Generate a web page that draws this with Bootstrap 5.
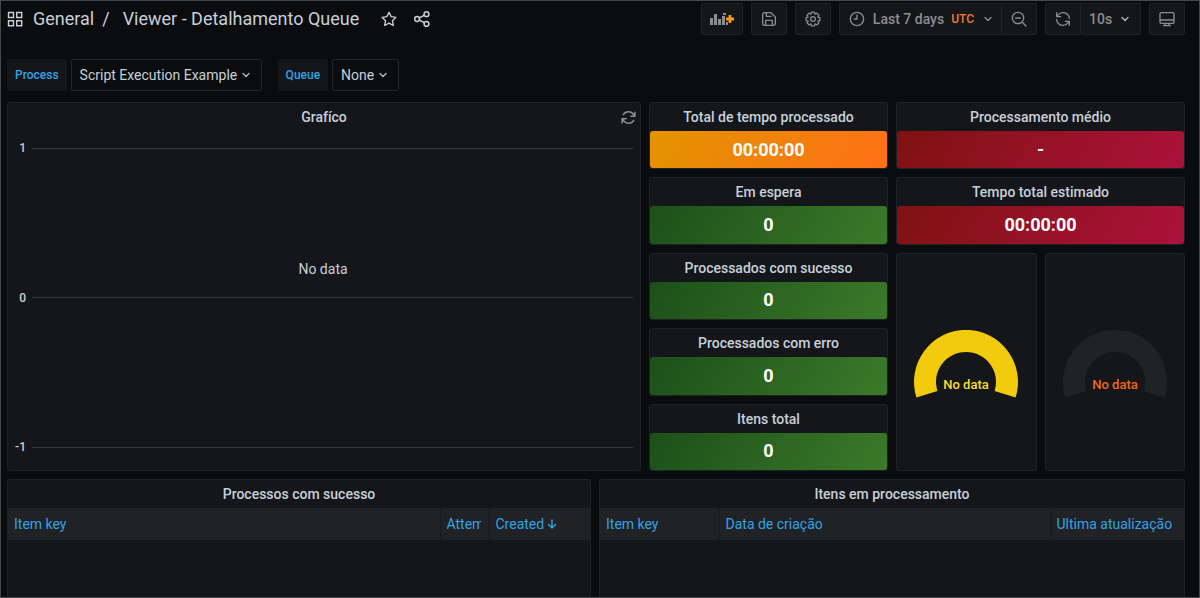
<!DOCTYPE html>
<html lang="pt-BR" data-bs-theme="dark">
<head>
<meta charset="utf-8">
<meta name="viewport" content="width=device-width, initial-scale=1">
<title>Viewer - Detalhamento Queue</title>
<link href="https://cdn.jsdelivr.net/npm/bootstrap@5.3.0/dist/css/bootstrap.min.css" rel="stylesheet">
<style>
  :root { --panel: #141619; --line: #202226; --ink: #c7d0d9; --dim: #8a8d93; --link: #33a2e5; }
  body { background: #0b0c0e; color: var(--ink); font-family: Roboto, "Liberation Sans", sans-serif; font-size: 14px; line-height: 20px; }
  .frame { border: 1px solid #464849; padding: 2px 14px 0 6px; }
  svg { display: block; flex: none; }
  .line-icon { fill: none; stroke: currentColor; stroke-width: 2; stroke-linecap: round; stroke-linejoin: round; }
  h1, h1 a { font-size: 18px; line-height: 32px; font-weight: 400; margin: 0; color: var(--ink); text-decoration: none; white-space: nowrap; }
  .crumbs { margin: 0 22px 0 10px; }
  .crumbs span { padding: 0 13px 0 8px; }
  .plain { background: none; border: 0; padding: 0; color: var(--ink); }
  .tool { --bs-btn-color: var(--dim); --bs-btn-bg: var(--panel); --bs-btn-border-color: var(--line); --bs-btn-hover-bg: #202226; --bs-btn-hover-color: #c7d0d9; --bs-btn-hover-border-color: #2c3235;
    --bs-btn-border-radius: 2px; --bs-btn-padding-x: 9px; --bs-btn-padding-y: 0; --bs-btn-font-size: 14px; --bs-btn-font-weight: 500; height: 32px; display: flex; align-items: center; justify-content: center; min-width: 36px; white-space: nowrap; }
  .tool-wide { --bs-btn-padding-x: 8px; }
  .utc { color: #f37a28; font-size: 12px; margin: 0 10px 0 7px; }
  .pick { appearance: none; height: 32px; color: var(--ink); background: #0b0c0e url("data:image/svg+xml,%3Csvg xmlns='http://www.w3.org/2000/svg' viewBox='0 0 8 8' fill='none' stroke='%23b4bac2' stroke-width='1.3' stroke-linecap='round'%3E%3Cpath d='M1 2.5 4 5.5 7 2.5'/%3E%3C/svg%3E") no-repeat right 11px center / 8px; border: 1px solid #25272b; border-radius: 2px; padding: 0 24px 0 8px; }
  .pick-script { width: 191px; }
  .pick-queue { width: 67px; }
  .pick-rate { width: 60px; background-color: var(--panel); border-color: var(--line); color: var(--dim); font-weight: 500; border-left: 0; }
  .var-label { background: var(--panel); color: var(--link); height: 32px; line-height: 32px; padding: 0 8px; font-size: 12px; font-weight: 500; border-radius: 2px; }
  .vars { margin-top: 24px; }
  .board { display: grid; gap: 8px; margin-top: 11px; grid-template-columns: 634fr 239fr 289fr; min-height: 369px; }
  .stack { display: grid; gap: 8px; grid-template-rows: repeat(5, 1fr); }
  .gauges { grid-row: 3 / 6; display: grid; gap: 8px; grid-template-columns: 1fr 1fr; }
  .pane { background: var(--panel); border: 1px solid var(--line); border-radius: 3px; display: flex; flex-direction: column; min-width: 0; position: relative; }
  .pane h2 { color: var(--ink); font-size: 14px; font-weight: 500; line-height: 28px; margin: 0; text-align: center; white-space: nowrap; }
  .figure-tile { flex: 1; border-radius: 3px; color: #fff; font-size: 18px; font-weight: 700; display: flex; align-items: center; justify-content: center; }
  .amber { background: linear-gradient(120deg, #e39400, #ff7016); }
  .green { background: linear-gradient(120deg, #1c5019, #3b7a29); }
  .crimson { background: linear-gradient(120deg, #7f1211, #ac123b); }
  .reload { position: absolute; top: 7px; right: 4px; color: var(--dim); }
  .plot { flex: 1; margin: 9px 7px 15px 5px; position: relative; font-size: 12px; line-height: 16px; font-weight: 500; display: flex; flex-direction: column; justify-content: space-between; }
  .tick { display: flex; align-items: center; gap: 6px; }
  .tick span { width: 13px; text-align: right; }
  .tick i { flex: 1; height: 1px; background: #37393d; }
  .empty-note { position: absolute; inset: 0; padding-bottom: 58px; display: flex; align-items: center; justify-content: center; font-size: 14px; font-weight: 400; }
  .gauge text { font-size: 13px; font-weight: 500; text-anchor: middle; }
  .lists { display: grid; gap: 8px; margin-top: 8px; grid-template-columns: 584fr 586fr; flex: 1; }
  .lists .pane { border-bottom: 0; border-radius: 3px 3px 0 0; }
  .grid-table { table-layout: fixed; width: 100%; }
  .grid-table th { height: 32px; background: #202226; color: var(--link); font-weight: 400; padding: 0 8px 0 6px; border-right: 1px solid #17191c; white-space: nowrap; }
  .grid-table th:last-child { border-right: 0; }
  .grid-table th > span { display: flex; align-items: center; gap: 3px; overflow: hidden; }
</style>
</head>
<body>
<div class="frame min-vh-100 d-flex flex-column">
  <header class="d-flex align-items-center justify-content-between">
    <div class="d-flex align-items-center">
      <svg width="16" height="16" viewBox="0 0 16 16" fill="none" stroke="currentColor" stroke-width="1.4"><path d="M1.5 1.5h5v5h-5zM9.700 1.500h5v5h-5zM1.500 9.700h5v5h-5zM9.700 9.700h5v5h-5z"/></svg>
      <h1 class="crumbs d-flex"><a href="#">General</a><span>/</span><a href="#">Viewer - Detalhamento Queue</a></h1>
      <button class="plain" aria-label="Favorito"><svg class="line-icon" width="16" height="16" viewBox="0 0 24 24"><path d="m12 2 3.200 6.500 7.100 1-5.100 5 1.200 7.200L12 18.300l-6.400 3.400 1.200-7.200-5.100-5 7.100-1z"/></svg></button>
      <button class="plain ms-3" aria-label="Compartilhar"><svg class="line-icon" width="18" height="18" viewBox="0 0 24 24"><circle cx="5.500" cy="12" r="3.200"/><circle cx="18" cy="5.500" r="3.200"/><circle cx="18" cy="18.500" r="3.200"/><path d="m8.500 10.500 6.600-3.500M8.500 13.500l6.600 3.500"/></svg></button>
    </div>
    <div class="d-flex gap-2">
      <button class="btn tool tool-wide" aria-label="Adicionar painel"><svg width="24" height="16" viewBox="0 0 24 16"><path fill="#8a8d93" d="M0 7h3v7H0zM4 3h3v11H4zM8 8h3v6H8zM12 5h3v9h-3zM16 11h2v3h-2zM13 2h3v2h-3z"/><path d="M20 4v8m-4-4h8" stroke="#f79520" stroke-width="2.800"/></svg></button>
      <button class="btn tool" aria-label="Salvar"><svg class="line-icon" width="16" height="16" viewBox="0 0 24 24"><path d="M5 2.500h10l6.500 6.500v10a2.500 2.500 0 0 1-2.500 2.500H5A2.500 2.500 0 0 1 2.500 19V5A2.500 2.500 0 0 1 5 2.500zM8 2.500V8h7M7 21v-7h10v7"/></svg></button>
      <button class="btn tool" aria-label="Configurações"><svg class="line-icon" width="16" height="16" viewBox="0 0 24 24"><circle cx="12" cy="12" r="3.500"/><path d="M9.700 1.800h4.600l.8 2.900 2.700-1.500 3.100 3.100-1.500 2.700 2.900.8v4.500l-2.900.8 1.500 2.700-3.100 3.100-2.700-1.500-.8 2.900H9.700l-.8-2.900-2.700 1.500-3.100-3.100 1.500-2.700-2.900-.8V9.800l2.900-.8-1.500-2.700 3.100-3.100 2.700 1.500z"/></svg></button>
      <div class="btn-group">
        <button class="btn tool" aria-haspopup="true"><svg class="line-icon me-2" width="16" height="16" viewBox="0 0 24 24"><circle cx="12" cy="12" r="10"/><path d="M12 6v6H8"/></svg>Last 7 days<span class="utc">UTC</span><svg class="line-icon" width="8" height="8" viewBox="0 0 8 8" style="stroke-width:1.3"><path d="M1 2.500 4 5.500 7 2.500"/></svg></button>
        <button class="btn tool" aria-label="Reduzir zoom"><svg class="line-icon" width="16" height="16" viewBox="0 0 24 24"><circle cx="10.500" cy="10.500" r="8.500"/><path d="m17 17 5.500 5.500M7 10.500h7"/></svg></button>
      </div>
      <div class="d-flex">
        <button class="btn tool rounded-end-0" aria-label="Atualizar"><svg class="line-icon" width="16" height="16" viewBox="0 0 24 24"><path d="M21.500 11A9.500 9.500 0 0 0 4.500 6.200L2.500 8.500m0-6v6h6M2.500 13a9.500 9.500 0 0 0 17 4.800l2-2.300m0 6v-6h-6"/></svg></button>
        <select class="pick pick-rate" aria-label="Intervalo de atualização"><option>10s</option></select>
      </div>
      <button class="btn tool" aria-label="Modo de exibição"><svg class="line-icon" width="16" height="16" viewBox="0 0 24 24"><path d="M3.500 2.500h17a2 2 0 0 1 2 2v12a2 2 0 0 1-2 2h-17a2 2 0 0 1-2-2v-12a2 2 0 0 1 2-2zM1.500 13.500h21M9 18.500v3.500M15 18.500v3.500M7 22h10"/></svg></button>
    </div>
  </header>

  <div class="vars d-flex">
    <label class="var-label me-1" for="proc">Process</label>
    <select class="pick pick-script" id="proc"><option>Script Execution Example</option></select>
    <label class="var-label ms-3 me-1" for="queue">Queue</label>
    <select class="pick pick-queue" id="queue"><option>None</option></select>
  </div>

  <main class="d-flex flex-column flex-grow-1">
    <div class="board">
      <section class="pane">
        <h2>Grafíco</h2>
        <svg class="reload line-icon" width="15" height="15" viewBox="0 0 16 16" style="stroke-width:1.7"><path d="M14 6.500A6.300 6.300 0 0 0 2.500 5M2 9.500A6.300 6.300 0 0 0 13.500 11M14.800 2.500v4.200h-4.200M1.200 13.500V9.300h4.200"/></svg>
        <div class="plot">
          <div class="tick"><span>1</span><i></i></div>
          <div class="tick"><span>0</span><i></i></div>
          <div class="tick"><span>-1</span><i></i></div>
          <div class="empty-note">No data</div>
        </div>
      </section>
      <div class="stack">
        <section class="pane"><h2>Total de tempo processado</h2><div class="figure-tile amber">00:00:00</div></section>
        <section class="pane"><h2>Em espera</h2><div class="figure-tile green">0</div></section>
        <section class="pane"><h2>Processados com sucesso</h2><div class="figure-tile green">0</div></section>
        <section class="pane"><h2>Processados com erro</h2><div class="figure-tile green">0</div></section>
        <section class="pane"><h2>Itens total</h2><div class="figure-tile green">0</div></section>
      </div>
      <div class="stack">
        <section class="pane"><h2>Processamento médio</h2><div class="figure-tile crimson">-</div></section>
        <section class="pane"><h2>Tempo total estimado</h2><div class="figure-tile crimson">00:00:00</div></section>
        <div class="gauges">
          <section class="pane align-items-center justify-content-center pt-1"><svg class="gauge" width="104" height="68" viewBox="0 0 104 68"><path fill="#f2cc0c" d="M2.400 67.500A52 52 0 1 1 101.600 67.500L80.600 61A30 30 0 1 0 23.400 61Z"/><text x="52" y="59" fill="#fade2a">No data</text></svg></section>
          <section class="pane align-items-center justify-content-center pt-1"><svg class="gauge" width="104" height="68" viewBox="0 0 104 68"><path fill="#202226" d="M2.400 67.500A52 52 0 1 1 101.600 67.500L80.600 61A30 30 0 1 0 23.400 61Z"/><text x="52" y="59" fill="#f2691a">No data</text></svg></section>
        </div>
      </div>
    </div>
    <div class="lists">
      <section class="pane"><h2>Processos com sucesso</h2>
        <table class="grid-table">
          <colgroup><col><col style="width:49px"><col style="width:101px"></colgroup>
          <thead><tr><th><span>Item key</span></th><th><span>Attem</span></th><th><span>Created<svg class="line-icon" width="10" height="10" viewBox="0 0 10 10" style="stroke-width:1.4"><path d="M5 1v8M1.500 5.500 5 9l3.500-3.500"/></svg></span></th></tr></thead>
        </table>
      </section>
      <section class="pane"><h2>Itens em processamento</h2>
        <table class="grid-table">
          <colgroup><col style="width:119px"><col><col style="width:134px"></colgroup>
          <thead><tr><th><span>Item key</span></th><th><span>Data de criação</span></th><th><span>Ultima atualização</span></th></tr></thead>
        </table>
      </section>
    </div>
  </main>
</div>
<script src="https://cdn.jsdelivr.net/npm/bootstrap@5.3.0/dist/js/bootstrap.bundle.min.js"></script>
</body>
</html>
